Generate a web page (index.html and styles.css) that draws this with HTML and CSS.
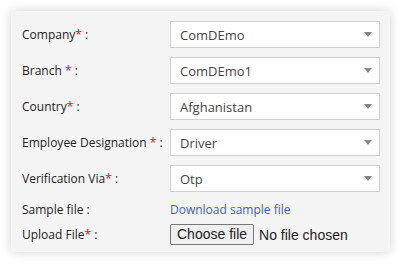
FILE: index.html
```html
<!DOCTYPE html>
<html lang="en">
<head>
    <meta charset="UTF-8">
    <meta name="viewport" content="width=device-width, initial-scale=1.0">
    <title>Employee upload</title>
    <link rel="stylesheet" href="styles.css">
</head>
<body>
<div class="form-container">
    <div class="form-row">
        <label for="company">Company<span class="req">*</span> :</label>
        <div class="select-wrap">
            <select id="company"><option>ComDEmo</option></select>
        </div>
    </div>
    <div class="form-row">
        <label for="branch">Branch <span class="req">*</span> :</label>
        <div class="select-wrap">
            <select id="branch"><option>ComDEmo1</option></select>
        </div>
    </div>
    <div class="form-row">
        <label for="country">Country<span class="req">*</span> :</label>
        <div class="select-wrap">
            <select id="country"><option>Afghanistan</option></select>
        </div>
    </div>
    <div class="form-row">
        <label for="designation">Employee Designation <span class="req">*</span> :</label>
        <div class="select-wrap">
            <select id="designation"><option>Driver</option></select>
        </div>
    </div>
    <div class="form-row">
        <label for="verification">Verification Via<span class="req">*</span> :</label>
        <div class="select-wrap">
            <select id="verification"><option>Otp</option></select>
        </div>
    </div>
    <div class="form-row text-row">
        <label>Sample file :</label>
        <a href="#" class="sample-link">Download sample file</a>
    </div>
    <div class="form-row text-row last-row">
        <label for="uploadFile">Upload File<span class="req">*</span> :</label>
        <div class="file-field">
            <input type="file" id="uploadFile" class="file-input">
            <label for="uploadFile" class="file-button">Choose file</label>
            <span class="file-name">No file chosen</span>
        </div>
    </div>
</div>
</body>
</html>
```

FILE: styles.css
```css
body {
    margin: 0;
    padding: 11px;
    background-color: #fff;
    font-family: "Open Sans", Arial, sans-serif;
    font-size: 12px;
    color: #222;
}
.form-container {
    width: 379px;
    box-sizing: border-box;
    padding: 10px 10px 7px 11px;
    background-color: #f4f4f4;
    box-shadow: 0 0 10px rgba(0, 0, 0, 0.18);
}
.form-row {
    display: grid;
    grid-template-columns: 148px 210px;
    align-items: center;
    margin-bottom: 9px;
}
.form-row label {
    white-space: nowrap;
}
.req {
    color: #f00;
}
.select-wrap {
    position: relative;
}
.select-wrap select {
    width: 100%;
    height: 27px;
    padding: 0 24px 0 9px;
    border: 1px solid #cfcfcf;
    border-radius: 0;
    background-color: #fff;
    color: #444;
    font-family: "Open Sans", Arial, sans-serif;
    font-size: 13px;
    -webkit-appearance: none;
    appearance: none;
    outline: none;
}
.select-wrap::after {
    content: "";
    position: absolute;
    right: 8px;
    top: 11px;
    border-left: 4px solid transparent;
    border-right: 4px solid transparent;
    border-top: 5px solid #888;
    pointer-events: none;
}
.text-row {
    margin-bottom: 6px;
}
.last-row {
    margin-bottom: 0;
}
.sample-link {
    color: #3b62c4;
    text-decoration: none;
}
.file-field {
    display: flex;
    align-items: center;
    font-family: "Liberation Sans", Arial, sans-serif;
    font-size: 14px;
    color: #222;
}
.file-input {
    display: none;
}
.file-button {
    box-sizing: border-box;
    height: 21px;
    padding: 0 6px;
    margin-right: 5px;
    border: 1px solid #767676;
    border-radius: 2px;
    background-color: #efefef;
    line-height: 19px;
    cursor: pointer;
}
```
